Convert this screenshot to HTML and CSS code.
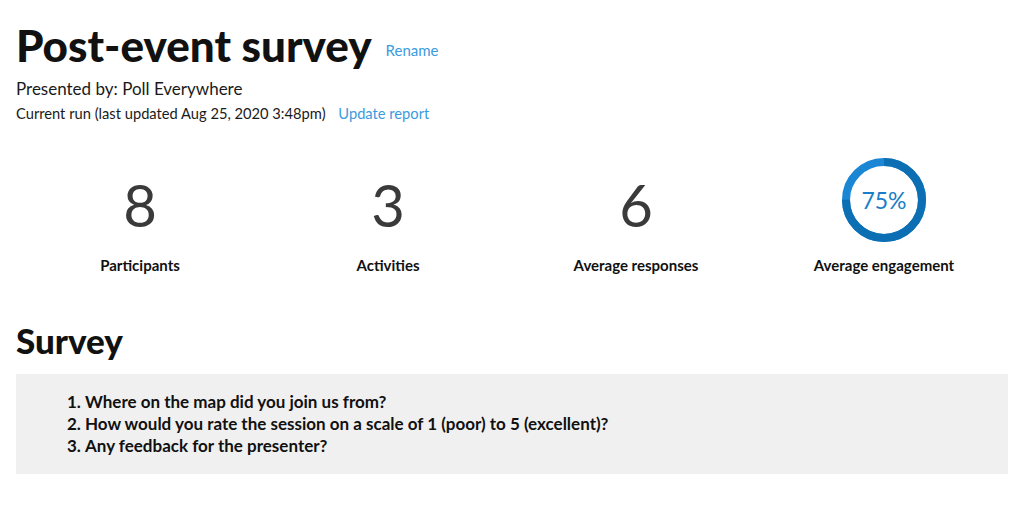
FILE: index.html
```html
<!DOCTYPE html>
<html>
<head>
<meta charset="utf-8">
<link rel="stylesheet" href="styles.css">
</head>
<body>
<div class="page">
  <header class="head">
    <div class="title-row"><h1 class="title">Post-event survey</h1><a class="link rename">Rename</a></div>
    <p class="presenter">Presented by: Poll Everywhere</p>
    <p class="run">Current run (last updated Aug 25, 2020 3:48pm) <a class="link update">Update report</a></p>
  </header>
  <section class="stats">
    <div class="stat"><div class="num">8</div><div class="label">Participants</div></div>
    <div class="stat"><div class="num">3</div><div class="label">Activities</div></div>
    <div class="stat"><div class="num">6</div><div class="label">Average responses</div></div>
    <div class="stat">
      <div class="ring">
        <svg width="84" height="84" viewBox="0 0 84 84">
          <circle cx="42" cy="42" r="38" fill="none" stroke="#1a86d4" stroke-width="8"/>
          <circle cx="42" cy="42" r="38" fill="none" stroke="#0c6fb3" stroke-width="8" stroke-dasharray="179.07 238.76" transform="rotate(-90 42 42)"/>
        </svg>
        <span class="pct">75%</span>
      </div>
      <div class="label">Average engagement</div>
    </div>
  </section>
  <h2 class="section-title">Survey</h2>
  <div class="survey-box">
    <ol class="questions">
      <li>Where on the map did you join us from?</li>
      <li>How would you rate the session on a scale of 1 (poor) to 5 (excellent)?</li>
      <li>Any feedback for the presenter?</li>
    </ol>
  </div>
</div>
</body>
</html>
```
FILE: styles.css
```css
* { box-sizing: border-box; }
html, body { margin: 0; padding: 0; background: #fff; }
body { font-family: "Lato", "Liberation Sans", sans-serif; color: #1a1a1a; }
.page { padding: 16px 16px 0 16px; }
.title-row { height: 58px; line-height: 58px; white-space: nowrap; }
.title { display: inline; margin: 0; font-size: 44px; font-weight: 900; line-height: 58px; color: #111; }
.link { color: #3a9be0; cursor: pointer; }
.rename { font-size: 15px; margin-left: 14px; vertical-align: 6px; }
.presenter { margin: 4px 0 0 0; font-size: 17px; line-height: 22px; }
.run { margin: 3px 0 0 0; font-size: 14.7px; line-height: 20px; }
.update { margin-left: 9px; }
.stats { display: grid; grid-template-columns: repeat(4, 1fr); margin-top: 35px; }
.stat { display: flex; flex-direction: column; align-items: center; }
.num { height: 84px; font-size: 58px; line-height: 94px; font-weight: 400; color: #3a3a3a; }
.ring { position: relative; width: 84px; height: 84px; }
.ring svg { display: block; }
.pct { position: absolute; inset: 0; display: flex; align-items: center; justify-content: center; font-size: 23px; color: #1a7dc8; }
.label { margin-top: 13px; font-size: 15px; font-weight: 700; line-height: 20px; color: #111; }
.section-title { margin: 45px 0 0 0; font-size: 35px; font-weight: 900; line-height: 40px; color: #111; }
.survey-box { margin-top: 14px; background: #f0f0f0; padding: 17px 0 17px 0; }
.questions { margin: 0; padding-left: 69px; font-size: 17px; font-weight: 700; line-height: 22px; color: #111; }
```
